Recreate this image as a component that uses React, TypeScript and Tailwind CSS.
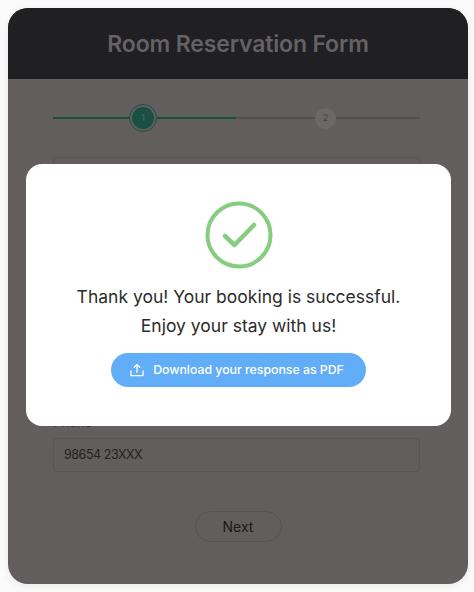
import React from 'react';

const App = () => {
  return (
    <div className="w-[474px] h-[592px] bg-[#fbfbfb] p-2 font-['Inter',sans-serif] overflow-hidden">
      <div className="relative w-[460px] h-[576px] rounded-[20px] overflow-hidden bg-[#625e5d] shadow-[0_2px_8px_rgba(0,0,0,0.08)]">
        <header className="h-[71px] bg-[#201f21] flex items-center justify-center pt-[1px]">
          <h1 className="text-[23px] font-semibold text-[#646264] tracking-[-0.15px]">
            Room Reservation Form
          </h1>
        </header>

        <main className="pl-[45px] pr-[48px]">
          {/* steps */}
          <div className="flex h-[28px] mt-[25px] items-center">
            <div className="w-[183px] flex items-center">
              <div className="w-[76px] h-[2px] bg-[#1a5044]" />
              <div className="w-[28px] h-[28px] rounded-full border border-[#1a5044] p-[2px] shrink-0">
                <div className="w-full h-full rounded-full bg-[#1a5044] flex items-center justify-center text-[9px] text-[#3f7264]">
                  1
                </div>
              </div>
              <div className="flex-1 h-[2px] bg-[#1a5044]" />
            </div>
            <div className="flex-1 flex items-center">
              <div className="w-[79px] h-[2px] bg-[#535050]" />
              <div className="w-[21px] h-[21px] rounded-full bg-[#6c6867] flex items-center justify-center text-[9px] text-[#454241] shrink-0">
                2
              </div>
              <div className="flex-1 h-[2px] bg-[#535050]" />
            </div>
          </div>

          {/* field behind the dialog */}
          <div className="h-[40px] mt-[25px] rounded border border-[#595554]" />

          <label className="block mt-[217px] text-[13px] leading-[16px] text-[#343130]">
            Phone
          </label>
          <div className="mt-[8px] h-[34px] rounded border border-[#595554] px-[10px] flex items-center text-[12.5px] tracking-[-0.45px] text-[#242221]">
            98654 23XXX
          </div>

          <div className="flex justify-center mt-[39px] pl-[3px]">
            <button className="w-[87px] h-[31px] rounded-full border border-[#575352] text-[14px] text-[#1c1a1a]">
              Next
            </button>
          </div>
        </main>

        {/* success dialog */}
        <div className="absolute left-[18px] top-[156px] w-[425px] h-[262px] rounded-[16px] bg-white flex flex-col items-center pt-[37px]">
          <svg width="68" height="68" viewBox="0 0 68 68" fill="none">
            <circle cx="34" cy="34" r="31.5" stroke="#85ce7f" strokeWidth="4" />
            <path
              d="M20 35 L29.5 44 L49 24"
              stroke="#85ce7f"
              strokeWidth="4.5"
              strokeLinecap="round"
              strokeLinejoin="round"
            />
          </svg>
          <p className="mt-[13px] text-[17.5px] leading-[29px] text-[#2b2b2b] text-center">
            Thank you! Your booking is successful.
            <br />
            Enjoy your stay with us!
          </p>
          <button className="mt-[13px] w-[255px] h-[34px] rounded-full bg-[#61adf8] flex items-center justify-center gap-[9px] text-[12.3px] font-medium text-white pr-[3px]">
            <svg width="14" height="14" viewBox="0 0 15 15" fill="none" stroke="white" strokeWidth="1.4" strokeLinecap="round" strokeLinejoin="round">
              <path d="M7.5 10 V1.5 M4.5 4.5 L7.5 1.5 L10.5 4.5" />
              <path d="M1 8.5 V13.5 H14 V8.5" />
            </svg>
            Download your response as PDF
          </button>
        </div>
      </div>
    </div>
  );
};

export default App;
